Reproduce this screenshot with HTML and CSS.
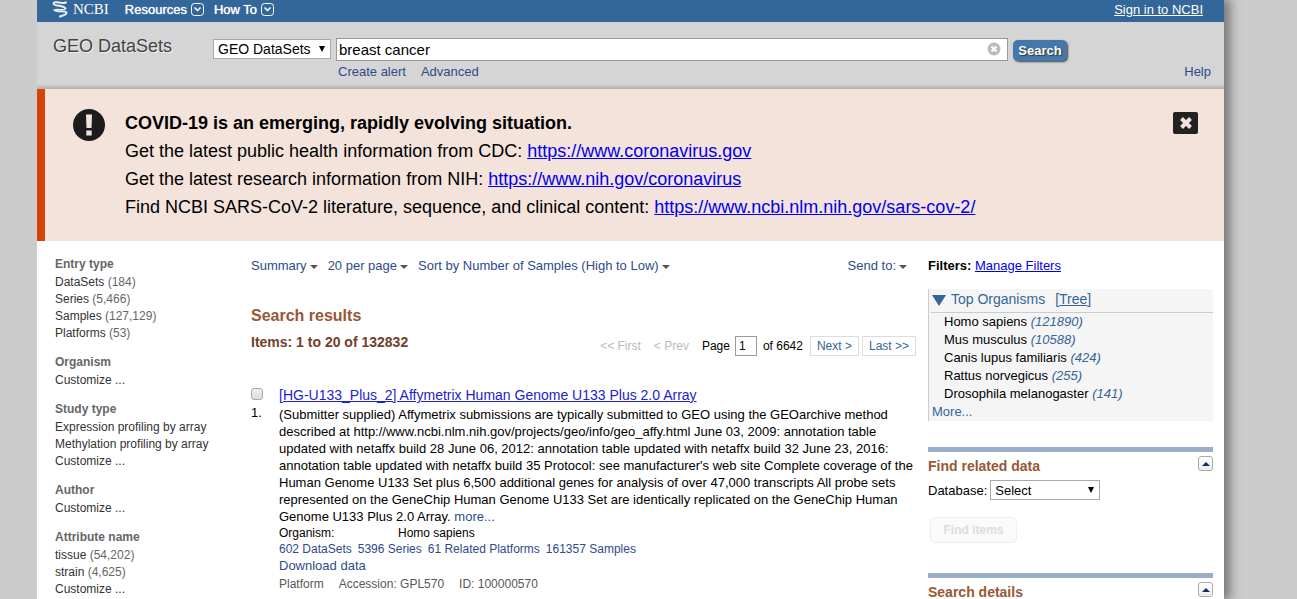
FILE: index.html
```html
<!DOCTYPE html>
<html lang="en">
<head>
<meta charset="UTF-8" />
<meta name="viewport" content="width=device-width, initial-scale=1" />
<title>breast cancer - GEO DataSets - NCBI</title>
<link rel="stylesheet" href="styles.css">
</head>
<body>

<div class="page">

  <div class="top-bar">
    <a class="logo" href="#">
      <svg width="17" height="18" viewBox="0 0 17 18" fill="none" stroke="#e4edf5" stroke-linecap="round">
        <path d="M14 2.500C9 4.500 2 0 1.500 3.500C1.500 6.500 12 5 13.500 8.500" stroke-width="2"/>
        <path d="M13.500 8.500C12 11.500 6 8.500 2.500 10" stroke-width="1.500"/>
        <path d="M2.500 10C4 12.500 13.500 10 14.500 12.500C15 15 10 15.500 8 16.500" stroke-width="2"/>
      </svg>
      <span>NCBI</span>
    </a>
    <a class="top-menu" href="#">Resources
      <svg width="13" height="13" viewBox="0 0 13 13" fill="none" stroke="#fff"><rect x=".5" y=".5" width="12" height="12" rx="3"/><path d="M3.500 4.500L6.500 7.500L9.500 4.500" stroke-width="1.500"/></svg>
    </a>
    <a class="top-menu" href="#">How To
      <svg width="13" height="13" viewBox="0 0 13 13" fill="none" stroke="#fff"><rect x=".5" y=".5" width="12" height="12" rx="3"/><path d="M3.500 4.500L6.500 7.500L9.500 4.500" stroke-width="1.500"/></svg>
    </a>
    <a class="sign-in" href="#">Sign in to NCBI</a>
  </div>

  <form class="search-area">
    <div class="db-title">GEO DataSets</div>
    <div class="select-wrap db-select">
      <select aria-label="Database to search">
        <option>GEO DataSets</option>
      </select>
    </div>
    <div class="term">
      <div class="term-box">
        <input type="text" aria-label="Search term" value="breast cancer">
        <button type="button" class="clear-btn" aria-label="Clear">
          <svg width="14" height="14" viewBox="0 0 14 14"><circle cx="7" cy="7" r="6.500" fill="#bcbcbc"/><path d="M4.500 4.500L9.500 9.500M9.500 4.500L4.500 9.500" stroke="#fff" stroke-width="2"/></svg>
        </button>
      </div>
      <div class="term-links">
        <a href="#">Create alert</a>
        <a href="#">Advanced</a>
      </div>
    </div>
    <button type="submit" class="search-btn">Search</button>
    <a class="help" href="#">Help</a>
  </form>

  <div class="alert">
    <svg class="alert-icon" width="32" height="32" viewBox="0 0 32 32"><circle cx="16" cy="16" r="16" fill="#1c1c1c"/><path d="M13 5.500H19L18.500 19H13.500ZM13.300 21.500H18.700V26.500H13.300Z" fill="#f4e3db"/></svg>
    <div class="alert-text">
      <strong>COVID-19 is an emerging, rapidly evolving situation.</strong>
      <p>Get the latest public health information from CDC: <a href="#">https://www.coronavirus.gov</a></p>
      <p>Get the latest research information from NIH: <a href="#">https://www.nih.gov/coronavirus</a></p>
      <p>Find NCBI SARS-CoV-2 literature, sequence, and clinical content: <a href="#">https://www.ncbi.nlm.nih.gov/sars-cov-2/</a></p>
    </div>
    <button type="button" class="alert-close" aria-label="Close">
      <svg width="14" height="14" viewBox="0 0 14 14"><path d="M2.500 2.500L11.500 11.500M11.500 2.500L2.500 11.500" stroke="#f4e3db" stroke-width="4"/></svg>
    </button>
  </div>

  <div class="content">

    <div class="facets">
      <h3>Entry type</h3>
      <ul>
        <li><a href="#">DataSets</a> (184)</li>
        <li><a href="#">Series</a> (5,466)</li>
        <li><a href="#">Samples</a> (127,129)</li>
        <li><a href="#">Platforms</a> (53)</li>
      </ul>
      <h3>Organism</h3>
      <ul>
        <li><a href="#">Customize ...</a></li>
      </ul>
      <h3>Study type</h3>
      <ul>
        <li><a href="#">Expression profiling by array</a></li>
        <li><a href="#">Methylation profiling by array</a></li>
        <li><a href="#">Customize ...</a></li>
      </ul>
      <h3>Author</h3>
      <ul>
        <li><a href="#">Customize ...</a></li>
      </ul>
      <h3>Attribute name</h3>
      <ul>
        <li><a href="#">tissue</a> (54,202)</li>
        <li><a href="#">strain</a> (4,625)</li>
        <li><a href="#">Customize ...</a></li>
      </ul>
    </div>

    <div class="results">
      <div class="display-bar">
        <a class="drop" href="#">Summary</a>
        <a class="drop" href="#">20 per page</a>
        <a class="drop" href="#">Sort by Number of Samples (High to Low)</a>
        <a class="drop send-to" href="#">Send to:</a>
      </div>

      <h2>Search results</h2>
      <div class="count-row">
        <h3>Items: 1 to 20 of 132832</h3>
        <div class="pager">
          <span class="off">&lt;&lt; First</span>
          <span class="off">&lt; Prev</span>
          <label for="pageNo">Page</label>
          <input type="text" id="pageNo" value="1">
          <span class="total">of 6642</span>
          <a href="#">Next &gt;</a>
          <a href="#">Last &gt;&gt;</a>
        </div>
      </div>

      <div class="result">
        <div class="result-num">
          <input type="checkbox" id="item1">
          <label for="item1">1.</label>
        </div>
        <div class="result-body">
          <a class="result-title" href="#">[HG-U133_Plus_2] Affymetrix Human Genome U133 Plus 2.0 Array</a>
          <p class="desc">(Submitter supplied) Affymetrix submissions are typically submitted to GEO using the GEOarchive method described at http://www.ncbi.nlm.nih.gov/projects/geo/info/geo_affy.html June 03, 2009: annotation table updated with netaffx build 28 June 06, 2012: annotation table updated with netaffx build 32 June 23, 2016: annotation table updated with netaffx build 35 Protocol: see manufacturer's web site Complete coverage of the Human Genome U133 Set plus 6,500 additional genes for analysis of over 47,000 transcripts All probe sets represented on the GeneChip Human Genome U133 Set are identically replicated on the GeneChip Human Genome U133 Plus 2.0 Array. <a href="#">more...</a></p>
          <dl>
            <dt>Organism:</dt>
            <dd>Homo sapiens</dd>
          </dl>
          <div class="related">
            <a href="#">602 DataSets</a>
            <a href="#">5396 Series</a>
            <a href="#">61 Related Platforms</a>
            <a href="#">161357 Samples</a>
          </div>
          <div class="download"><a href="#">Download data</a></div>
          <div class="ids">
            <span>Platform</span>
            <span>Accession: GPL570</span>
            <span>ID: 100000570</span>
          </div>
        </div>
      </div>
    </div>

    <div class="side">
      <div class="filters"><strong>Filters:</strong> <a href="#">Manage Filters</a></div>

      <div class="organisms">
        <div class="organisms-head">
          <svg width="14" height="11" viewBox="0 0 14 11"><path d="M0 0H14L7 11Z" fill="#336699"/></svg>
          <span>Top Organisms</span>
          <span>[<a href="#">Tree</a>]</span>
        </div>
        <ul>
          <li>Homo sapiens <em>(121890)</em></li>
          <li>Mus musculus <em>(10588)</em></li>
          <li>Canis lupus familiaris <em>(424)</em></li>
          <li>Rattus norvegicus <em>(255)</em></li>
          <li>Drosophila melanogaster <em>(141)</em></li>
        </ul>
        <a class="more" href="#">More...</a>
      </div>

      <div class="portlet">
        <div class="portlet-head">
          <h3>Find related data</h3>
          <button type="button" class="toggle" aria-label="Collapse"></button>
        </div>
        <div class="related-db">
          <label for="relatedDb">Database:</label>
          <div class="select-wrap">
            <select id="relatedDb">
              <option>Select</option>
            </select>
          </div>
        </div>
        <button type="button" class="find-btn" disabled>Find items</button>
      </div>

      <div class="portlet">
        <div class="portlet-head">
          <h3>Search details</h3>
          <button type="button" class="toggle" aria-label="Collapse"></button>
        </div>
      </div>
    </div>

  </div>
</div>

</body>
</html>
```

FILE: styles.css
```css
* {
  box-sizing: border-box;
}

body {
  margin: 0;
  background: #ccc;
  font-family: "Liberation Sans", Arial, sans-serif;
  font-size: 13px;
  color: #000;
}

h2, h3, p, ul, dl, dd {
  margin: 0;
  padding: 0;
}

ul {
  list-style: none;
}

a {
  color: #2f4a8b;
  text-decoration: none;
}

input, select, button {
  font-family: inherit;
}

.page {
  margin: 0 73px 0 37px;
  min-height: 100vh;
  background: #fff;
  box-shadow: 4px 0 10px 2px #777;
  clip-path: inset(0 -20px 0 0);
}

/* top bar */
.top-bar {
  display: flex;
  align-items: center;
  height: 22px;
  padding: 0 21px 4px 15px;
  background: #369;
}

.top-bar a {
  color: #fff;
}

.logo {
  display: flex;
  align-items: center;
  gap: 4px;
  margin-right: 16px;
  font-family: "Liberation Serif", serif;
  font-size: 15px;
}

.top-menu {
  display: flex;
  align-items: center;
  gap: 4px;
  margin-right: 10px;
  text-shadow: 0 0 1px #fff;
}

.top-bar .sign-in {
  margin-left: auto;
  text-decoration: underline;
}

/* search */
.search-area {
  display: grid;
  grid-template-columns: 155px 118px minmax(0, 1fr) 54px 139px;
  column-gap: 5px;
  align-items: start;
  height: 67px;
  padding: 16px 13px 0 16px;
  background: linear-gradient(#d5d5d5 62px, #b0b0b0);
}

.db-title {
  font-size: 18px;
  line-height: 16px;
  color: #444;
  text-shadow: 1px 1px 0 #eee;
}

.select-wrap {
  position: relative;
}

.select-wrap::after {
  content: "";
  position: absolute;
  right: 6px;
  top: 7px;
  border: 3px solid transparent;
  border-top: 6px solid #000;
  border-bottom: 0;
  pointer-events: none;
}

.select-wrap select {
  appearance: none;
  display: block;
  width: 100%;
  height: 20px;
  padding: 0 4px;
  border: 1px solid #a9a9a9;
  border-radius: 0;
  background: #fff;
  color: #000;
  font-size: 13px;
}

.db-select {
  margin-top: 1px;
}

.db-select select {
  font-size: 14px;
}

.term-box {
  position: relative;
}

.term-box input {
  display: block;
  width: 100%;
  height: 23px;
  padding: 0 24px 0 2px;
  border: 1px solid #999;
  font-size: 15px;
}

.clear-btn {
  position: absolute;
  right: 7px;
  top: 4px;
  padding: 0;
  border: 0;
  background: none;
  line-height: 0;
}

.term-links {
  display: flex;
  gap: 15px;
  padding: 3px 2px;
}

.search-btn {
  height: 21px;
  margin-top: 2px;
  padding: 0;
  border: 0;
  border-radius: 5px;
  background: #4477aa;
  box-shadow: 1px 1px 2px #444;
  color: #fff;
  font-size: 13px;
  font-weight: bold;
  text-shadow: 1px 1px 1px #333;
}

.help {
  margin-top: 26px;
  text-align: right;
}

/* alert */
.alert {
  display: flex;
  align-items: flex-start;
  padding: 20px 26px 20px 28px;
  border-left: 8px solid #d54309;
  background: #f4e3db;
  font-size: 18px;
  line-height: 28px;
}

.alert-icon {
  flex: none;
}

.alert-text {
  flex: 1;
  margin-left: 20px;
}

.alert-text a {
  color: #00e;
  text-decoration: underline;
}

.alert-close {
  display: flex;
  align-items: center;
  justify-content: center;
  width: 25px;
  height: 22px;
  margin-top: 3px;
  padding: 0;
  border: 0;
  border-radius: 2px;
  background: #212121;
}

/* content */
.content {
  display: grid;
  grid-template-columns: 196px minmax(0, 1fr) 285px;
  height: 358px;
  padding: 14px 11px 0 18px;
  overflow: hidden;
}

.facets {
  font-size: 12px;
  line-height: 17px;
  color: #666;
}

.facets h3 {
  font-size: 12px;
  line-height: 19px;
}

.facets ul {
  margin-bottom: 11px;
}

.facets a {
  color: #333;
}

.results {
  padding-right: 6px;
}

.display-bar {
  display: flex;
  gap: 10px;
  padding-right: 15px;
  line-height: 22px;
}

.drop::after {
  content: "";
  display: inline-block;
  margin-left: 3px;
  vertical-align: 1px;
  border: 4px solid transparent;
  border-top-color: #555;
  border-bottom: 0;
}

.send-to {
  margin-left: auto;
}

.results h2 {
  margin-top: 29px;
  font-size: 16px;
  line-height: 20px;
  color: #985735;
}

.count-row {
  display: flex;
  justify-content: space-between;
  padding: 7px 6px 0 0;
}

.count-row h3 {
  font-size: 14px;
  line-height: 18px;
  color: #724128;
}

.pager {
  display: flex;
  align-items: center;
  margin-top: 3px;
  font-size: 12px;
}

.pager .off {
  margin-right: 13px;
  color: #bbb;
}

.pager input {
  width: 22px;
  height: 20px;
  margin: 0 6px 0 5px;
  padding: 0 3px;
  border: 1px solid #999;
  font-size: 12px;
}

.pager .total {
  margin-right: 4px;
}

.pager a {
  margin-left: 3px;
  padding: 0 6px;
  border: 1px solid #ddd;
  line-height: 18px;
  color: #369;
}

.result {
  display: flex;
  margin-top: 28px;
}

.result-num {
  display: flex;
  flex-direction: column;
  width: 28px;
  flex: none;
}

.result-num input {
  appearance: none;
  width: 12px;
  height: 12px;
  margin: 4px 0 5px;
  border: 1px solid #aaa;
  border-radius: 3px;
  background: linear-gradient(#eee, #ddd);
}

.result-title {
  display: block;
  font-size: 14px;
  line-height: 22px;
  color: #22c;
  text-decoration: underline;
}

.desc {
  font-size: 13px;
  line-height: 17px;
}

.result-body dl {
  display: grid;
  grid-template-columns: 119px 1fr;
  font-size: 12px;
  line-height: 16px;
}

.related {
  display: flex;
  gap: 6px;
  font-size: 12px;
  line-height: 16px;
}

.download {
  font-size: 13px;
  line-height: 18px;
}

.ids {
  display: flex;
  gap: 15px;
  font-size: 12px;
  line-height: 18px;
  color: #575757;
}

/* right column */
.filters {
  line-height: 22px;
}

.filters a {
  color: #00e;
  text-decoration: underline;
}

.organisms {
  margin-top: 12px;
  padding-left: 2px;
  border-left: 1px solid #ccc;
  background: #f5f5f5;
  line-height: 18px;
}

.organisms-head {
  display: flex;
  align-items: center;
  height: 24px;
  padding: 0 0 4px 1px;
  border-bottom: 1px solid #ccc;
  font-size: 14px;
  color: #369;
}

.organisms-head svg {
  margin-top: 4px;
  margin-right: 5px;
}

.organisms-head span + span {
  margin-left: 10px;
}

.organisms-head a {
  color: #369;
  text-decoration: underline;
}

.organisms ul {
  padding-left: 13px;
}

.organisms em, .organisms .more {
  color: #369;
}

.organisms .more {
  display: block;
  padding-left: 1px;
}

.portlet {
  margin-top: 26px;
  border-top: 5px solid #99afc9;
}

.portlet + .portlet {
  margin-top: 30px;
}

.portlet-head {
  display: flex;
  align-items: flex-start;
  justify-content: space-between;
}

.portlet h3 {
  font-size: 14px;
  line-height: 28px;
  color: #985735;
}

.toggle {
  display: flex;
  align-items: center;
  justify-content: center;
  width: 15px;
  height: 15px;
  margin-top: 4px;
  padding: 0;
  border: 1px solid #aaa;
  border-radius: 3px;
  background: linear-gradient(#fff, #eee);
}

.toggle::before {
  content: "";
  border: 4px solid transparent;
  border-top: 0;
  border-bottom-color: #0d2d6b;
}

.related-db {
  display: flex;
  align-items: center;
  gap: 3px;
}

.related-db .select-wrap {
  width: 110px;
}

.find-btn {
  margin: 17px 0 0 2px;
  width: 87px;
  height: 26px;
  border: 1px solid #eee;
  border-radius: 5px;
  background: #fafafa;
  color: #ddd;
  font-size: 12px;
  font-weight: bold;
}
```
